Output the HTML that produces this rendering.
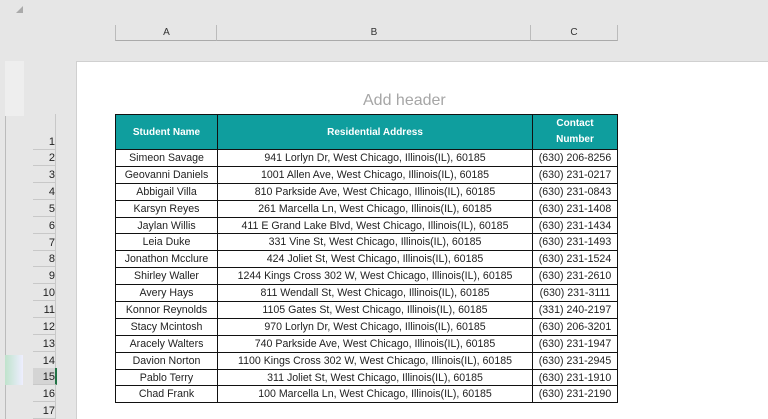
<!DOCTYPE html>
<html><head><meta charset="utf-8"><style>
html,body{margin:0;width:768px;height:419px;overflow:hidden}
body{background:#e6e6e6;position:relative;font-family:"Liberation Sans",sans-serif}
.abs{position:absolute}
.colh{top:25px;height:15px;border-left:1px solid #bbb;border-bottom:1px solid #aaa;font-size:10px;color:#333;text-align:center;line-height:15px}
.page{left:76px;top:61px;width:700px;height:370px;background:#fff;border-top:1px solid #d0d0d0;border-left:1px solid #d0d0d0}
table{position:absolute;left:115px;top:114px;border-collapse:collapse;font-size:10.6px;color:#222}
td{border:1px solid #111;text-align:center;padding:0;height:15.9px;white-space:nowrap;overflow:hidden}
th{background:#0f9e9e;color:#fff;border:1px solid #111;font-weight:bold;font-size:10px;height:34px;padding:0}
.rn{left:33px;width:22px;height:16px;border-bottom:1px solid #c8c8c8;border-right:1px solid #c8c8c8;font-size:11px;text-align:right;line-height:18px;color:#222}
</style></head><body>
<div class="abs" style="left:16px;top:6px;width:0;height:0;border-left:7px solid transparent;border-bottom:7px solid #aaa"></div>
<div class="abs colh" style="left:115px;width:101px">A</div>
<div class="abs colh" style="left:216px;width:314px">B</div>
<div class="abs colh" style="left:530px;width:86px;border-right:1px solid #bbb">C</div>
<div class="abs" style="left:5px;top:61px;width:19px;height:55px;background:#eee"></div>
<div class="abs" style="left:5px;top:116px;width:1px;height:303px;background:#bbb"></div>
<div class="abs" style="left:5px;top:355px;width:18px;height:30px;background:linear-gradient(90deg,#bfe3cc,#eef)"></div>
<div class="abs page"></div>
<div class="abs" style="left:363px;top:92px;font-size:16px;color:#a6a6a6">Add header</div>
<div class="abs" style="left:33px;top:114px;width:22px;height:305px;border-right:1px solid #c8c8c8"></div>
<table>
<tr><th style="width:101px">Student Name</th><th style="width:314px">Residential Address</th><th style="width:84px;line-height:16px">Contact<br>Number</th></tr>
<tr><td>Simeon Savage</td><td>941 Lorlyn Dr, West Chicago, Illinois(IL), 60185</td><td>(630) 206-8256</td></tr>
<tr><td>Geovanni Daniels</td><td>1001 Allen Ave, West Chicago, Illinois(IL), 60185</td><td>(630) 231-0217</td></tr>
<tr><td>Abbigail Villa</td><td>810 Parkside Ave, West Chicago, Illinois(IL), 60185</td><td>(630) 231-0843</td></tr>
<tr><td>Karsyn Reyes</td><td>261 Marcella Ln, West Chicago, Illinois(IL), 60185</td><td>(630) 231-1408</td></tr>
<tr><td>Jaylan Willis</td><td>411 E Grand Lake Blvd, West Chicago, Illinois(IL), 60185</td><td>(630) 231-1434</td></tr>
<tr><td>Leia Duke</td><td>331 Vine St, West Chicago, Illinois(IL), 60185</td><td>(630) 231-1493</td></tr>
<tr><td>Jonathon Mcclure</td><td>424 Joliet St, West Chicago, Illinois(IL), 60185</td><td>(630) 231-1524</td></tr>
<tr><td>Shirley Waller</td><td>1244 Kings Cross 302 W, West Chicago, Illinois(IL), 60185</td><td>(630) 231-2610</td></tr>
<tr><td>Avery Hays</td><td>811 Wendall St, West Chicago, Illinois(IL), 60185</td><td>(630) 231-3111</td></tr>
<tr><td>Konnor Reynolds</td><td>1105 Gates St, West Chicago, Illinois(IL), 60185</td><td>(331) 240-2197</td></tr>
<tr><td>Stacy Mcintosh</td><td>970 Lorlyn Dr, West Chicago, Illinois(IL), 60185</td><td>(630) 206-3201</td></tr>
<tr><td>Aracely Walters</td><td>740 Parkside Ave, West Chicago, Illinois(IL), 60185</td><td>(630) 231-1947</td></tr>
<tr><td>Davion Norton</td><td>1100 Kings Cross 302 W, West Chicago, Illinois(IL), 60185</td><td>(630) 231-2945</td></tr>
<tr><td>Pablo Terry</td><td>311 Joliet St, West Chicago, Illinois(IL), 60185</td><td>(630) 231-1910</td></tr>
<tr><td>Chad Frank</td><td>100 Marcella Ln, West Chicago, Illinois(IL), 60185</td><td>(630) 231-2190</td></tr>
</table>
<div class="abs rn" style="top:133px">1</div>
<div class="abs rn" style="top:149px">2</div><div class="abs rn" style="top:166px">3</div><div class="abs rn" style="top:183px">4</div><div class="abs rn" style="top:200px">5</div><div class="abs rn" style="top:217px">6</div><div class="abs rn" style="top:234px">7</div><div class="abs rn" style="top:250px">8</div><div class="abs rn" style="top:267px">9</div><div class="abs rn" style="top:284px">10</div><div class="abs rn" style="top:301px">11</div><div class="abs rn" style="top:318px">12</div><div class="abs rn" style="top:335px">13</div><div class="abs rn" style="top:352px">14</div><div class="abs rn" style="top:368px;background:#d4d4d4;border-right:2px solid #217346">15</div><div class="abs rn" style="top:385px">16</div><div class="abs rn" style="top:402px">17</div>
</body></html>
